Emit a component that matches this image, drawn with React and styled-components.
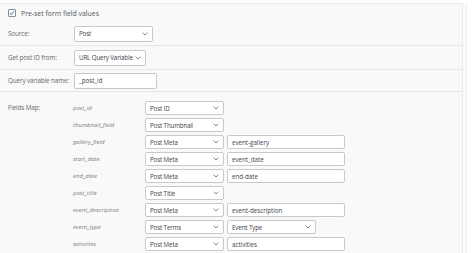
import React from 'react'
import styled, { createGlobalStyle } from 'styled-components'

const GlobalStyle = createGlobalStyle`
  html, body {
    margin: 0;
    padding: 0;
    background: #ffffff;
  }
  body {
    font-family: "Open Sans", "Noto Sans", sans-serif;
    color: #3c434a;
  }
`

const fieldsMap = [
  { key: 'post_id', source: 'Post ID' },
  { key: 'thumbnail_field', source: 'Post Thumbnail' },
  { key: 'gallery_field', source: 'Post Meta', value: 'event-gallery' },
  { key: 'start_date', source: 'Post Meta', value: 'event_date' },
  { key: 'end_date', source: 'Post Meta', value: 'end-date' },
  { key: 'post_title', source: 'Post Title' },
  { key: 'event_description', source: 'Post Meta', value: 'event-description' },
  { key: 'event_type', source: 'Post Terms', select: 'Event Type' },
  { key: 'activities', source: 'Post Meta', value: 'activities' },
]

function Chevron() {
  return (
    <svg width="6" height="4" viewBox="0 0 6 4">
      <path d="M0.6 0.6 L3 3 L5.4 0.6" fill="none" stroke="#646970" strokeWidth="0.8" />
    </svg>
  )
}

function Select({ children, width, height = 14 }) {
  return (
    <SelectBox $width={width} $height={height}>
      <span>{children}</span>
      <Chevron />
    </SelectBox>
  )
}

export default function App() {
  return (
    <>
      <GlobalStyle />
      <Page>
        <Panel>
          <CheckRow>
            <Checkbox>
              <svg width="7" height="6" viewBox="0 0 7 6">
                <path d="M0.8 3 L2.7 4.9 L6.2 0.8" fill="none" stroke="#2271b1" strokeWidth="1.1" />
              </svg>
            </Checkbox>
            <CheckText>Pre-set form field values</CheckText>
          </CheckRow>

          <Row $height={23}>
            <Label>Source:</Label>
            <Select width={79} height={16}>Post</Select>
          </Row>
          <Row $height={24} $divider>
            <Label>Get post ID from:</Label>
            <Select width={72} height={16}>URL Query Variable</Select>
          </Row>
          <Row $height={22} $divider>
            <Label>Query variable name:</Label>
            <Input $width={83} $height={16}>_post_id</Input>
          </Row>

          <MapSection>
            <MapLabel>Fields Map:</MapLabel>
            <MapGrid>
              {fieldsMap.map((f) => (
                <MapRow key={f.key}>
                  <FieldKey>{f.key}</FieldKey>
                  <Select width={79}>{f.source}</Select>
                  {f.value && <Input $width={118} $height={14}>{f.value}</Input>}
                  {f.select && <Select width={89}>{f.select}</Select>}
                </MapRow>
              ))}
            </MapGrid>
          </MapSection>
        </Panel>
        <Edge />
      </Page>
    </>
  )
}

const Page = styled.div`
  display: flex;
  height: 253px;
  padding-top: 3px;
  box-sizing: border-box;
  overflow: hidden;
`

const Panel = styled.div`
  width: 462px;
  background: #f9f9f9;
  border-top: 1px solid #ececec;
`

const Edge = styled.div`
  width: 3px;
  border-left: 1px solid #ebebeb;
  border-right: 1px solid #ececec;
  background: #fbfbfb;
`

const CheckRow = styled.div`
  display: flex;
  align-items: center;
  gap: 5px;
  height: 18px;
  padding: 0 8px;
`

const Checkbox = styled.div`
  width: 8px;
  height: 8px;
  margin-top: -1px;
  box-sizing: border-box;
  border: 1px solid #8c8f94;
  border-radius: 1px;
  background: #fff;
  display: flex;
  align-items: center;
  justify-content: center;
`

const CheckText = styled.span`
  font-size: 6.9px;
  color: #50575e;
`

const Row = styled.div`
  display: flex;
  align-items: center;
  height: ${(p) => p.$height}px;
  box-sizing: border-box;
  padding: 0 8px;
  border-top: ${(p) => (p.$divider ? '1px solid #e6e6e6' : 'none')};
`

const Label = styled.div`
  width: 66px;
  font-size: 6.3px;
  letter-spacing: -0.1px;
  color: #646970;
`

const SelectBox = styled.div`
  width: ${(p) => p.$width}px;
  height: ${(p) => p.$height}px;
  box-sizing: border-box;
  display: flex;
  align-items: center;
  justify-content: space-between;
  gap: 1px;
  padding: 0 4px 0 4px;
  background: #fff;
  border: 1px solid #c8c9cc;
  border-radius: 2px;
  font-size: 6.2px;
  letter-spacing: -0.12px;
  color: #3c434a;
  white-space: nowrap;

  span {
    overflow: hidden;
  }

  svg {
    flex-shrink: 0;
  }
`

const Input = styled.div`
  width: ${(p) => p.$width}px;
  height: ${(p) => p.$height}px;
  box-sizing: border-box;
  display: flex;
  align-items: center;
  padding: 0 4px;
  background: #fff;
  border: 1px solid #c8c9cc;
  border-radius: 2px;
  font-size: 6.2px;
  color: #3c434a;
`

const MapSection = styled.div`
  display: flex;
  align-items: flex-start;
  height: 160px;
  box-sizing: border-box;
  padding: 9px 8px 0;
  border-top: 1px solid #e6e6e6;
`

const MapLabel = styled.div`
  width: 65px;
  font-size: 6.3px;
  letter-spacing: -0.1px;
  color: #646970;
  padding-top: 2px;
`

const MapGrid = styled.div`
  display: flex;
  flex-direction: column;
  gap: 3px;
`

const MapRow = styled.div`
  display: flex;
  align-items: center;
  gap: 3px;
  height: 14px;
`

const FieldKey = styled.div`
  width: 69px;
  font-size: 6px;
  font-style: italic;
  color: #787c82;
`
